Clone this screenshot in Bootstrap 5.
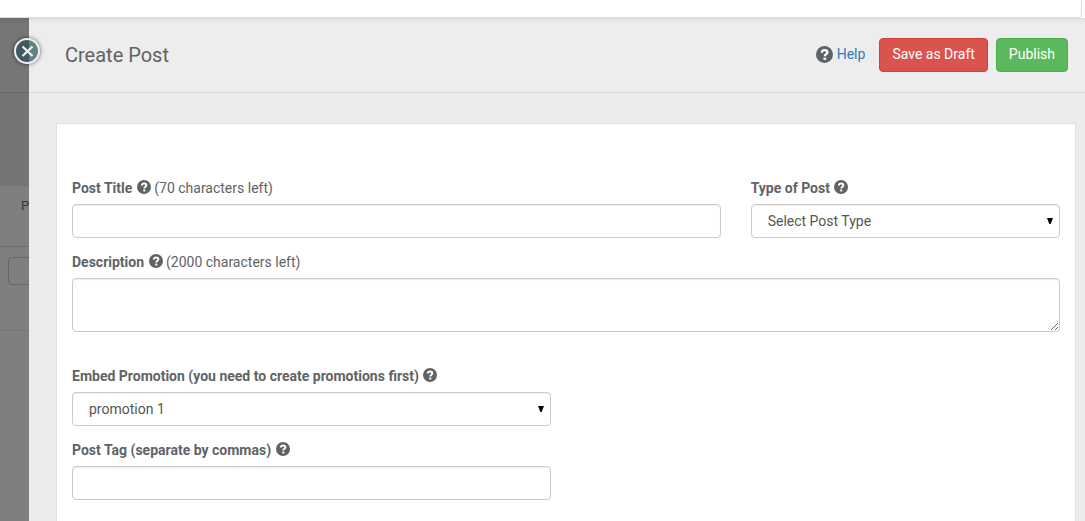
<!DOCTYPE html>
<html lang="en">
<head>
<meta charset="utf-8">
<meta name="viewport" content="width=device-width, initial-scale=1">
<title>Create Post</title>
<link href="https://cdn.jsdelivr.net/npm/bootstrap@5.3.0/dist/css/bootstrap.min.css" rel="stylesheet">
<style>
  body { font-family: Roboto, "Liberation Sans", sans-serif; font-size: 14px; line-height: 20px; color: #5f6365; background: #fff; }
  .top-strip { height: 18px; padding-right: 3px; background: #fff; }
  .top-box { height: 18px; border: solid #ddd; border-width: 0 1px 1px 0; border-bottom-right-radius: 4px; }
  .stage { background: #ebebeb; }
  /* dimmed page behind the panel */
  .backdrop-page { width: 29px; flex: none; background: #7f7f7f; color: #363839; font-size: 13px; white-space: nowrap; }
  .bd-head { height: 75px; background: linear-gradient(#6c6c6c, #767676 6px); border-bottom: 1px solid #6b6b6b; }
  .bd-space { height: 93px; background: #757575; border-bottom: 1px solid #727272; }
  .bd-row { height: 61px; padding: 10px 0 0 21px; border-bottom: 1px solid #6e6e6e; }
  .bd-field { height: 84px; padding: 10px 0 0 8px; border-bottom: 1px solid #747474; }
  .bd-field input { display: block; width: 90px; height: 28px; border: 1px solid #666; border-radius: 4px; background: transparent; }
  .panel-head { height: 75px; padding: 0 17px 0 36px; border-bottom: 1px solid #d8d8d8; background: linear-gradient(#dcdcdc, #e8e8e8 3px, #ededed 6px); }
  .panel-head h1 { font-size: 20px; line-height: 24px; font-weight: 400; }
  .close-round { position: absolute; left: 14px; top: 20px; width: 26px; height: 26px; padding: 0; border: 2px solid #eee; border-radius: 50%; box-shadow: 0 0 4px rgba(0,0,0,.6); background: linear-gradient(90deg, #3f5a62 13px, #638086 13px); z-index: 2; }
  .close-round svg { display: block; width: 22px; height: 22px; }
  .help-link { color: #337ab7; text-decoration: none; margin-right: 14px; padding-bottom: 2px; }
  .help-link svg { width: 17px; height: 17px; color: #5f6365; margin-right: 4px; }
  .btn { font-size: 14px; line-height: 20px; padding: 5px 12px 7px; border-radius: 4px; color: #fff; }
  .btn-draft { background: #d9534f; border-color: #d43f3a; }
  .btn-publish { background: #5cb85c; border-color: #4cae4c; }
  .panel-body { padding: 30px 9px 0 27px; }
  .form-sheet { padding: 54px 15px 21px; border: 1px solid #e0e0e0; border-bottom: 0; background: #fff; }
  .form-sheet .row { --bs-gutter-x: 30px; }
  .field { margin-bottom: 14px; }
  .field-wide { margin-bottom: 34px; }
  .field-label { display: block; margin-bottom: 6px; line-height: 20px; }
  .field-label b { font-weight: 700; }
  .q-icon { width: 14px; height: 14px; margin-left: 1px; vertical-align: -1px; }
  .form-control, .form-select { height: 34px; font-size: 14px; line-height: 20px; padding: 6px 12px; color: #555; border: 1px solid #ccc; border-radius: 4px; box-shadow: inset 0 1px 1px rgba(0,0,0,.075); }
  .form-select { padding: 6px 24px 6px 16px; background: #fff url("data:image/svg+xml,%3Csvg xmlns='http://www.w3.org/2000/svg' viewBox='0 0 6 6'%3E%3Cpath d='M0 0h6L3.6 6H2.4z'/%3E%3C/svg%3E") no-repeat right 6px center / 6px 6px; }
  textarea.form-control { height: 54px; min-height: 54px; }
</style>
</head>
<body class="d-flex flex-column min-vh-100">
<svg class="d-none" aria-hidden="true">
  <symbol id="question" viewBox="0 0 16 16">
    <circle cx="8" cy="8" r="8" fill="currentColor"/>
    <path d="M5.500 6.400C5.500 4.600 6.500 3.900 8 3.900c1.600 0 2.700.7 2.700 2.100 0 1.800-2.400 1.600-2.400 3.700" fill="none" stroke="#fff" stroke-width="2.200"/>
    <path d="M7.100 10.900h2.400v2.200H7.100z" fill="#fff"/>
  </symbol>
</svg>
<div class="top-strip"><div class="top-box"></div></div>
<div class="stage d-flex flex-grow-1 position-relative">
  <aside class="backdrop-page overflow-hidden" aria-hidden="true">
    <div class="bd-head"></div>
    <div class="bd-space"></div>
    <div class="bd-row">P</div>
    <div class="bd-field"><input type="text" tabindex="-1" aria-label="Filter"></div>
  </aside>
  <button type="button" class="close-round" aria-label="Close">
    <svg viewBox="0 0 22 22"><path d="M6.500 6.500l10 9.500M16.500 6.500l-10 9.500" stroke="#f2f2f2" stroke-width="2.200" fill="none"/></svg>
  </button>
  <main class="d-flex flex-column flex-grow-1">
    <header class="panel-head d-flex align-items-center">
      <h1 class="mb-0 me-auto">Create Post</h1>
      <a href="#" class="help-link d-flex align-items-center"><svg aria-hidden="true"><use href="#question"/></svg>Help</a>
      <button type="button" class="btn btn-draft me-2">Save as Draft</button>
      <button type="submit" form="post-form" class="btn btn-publish">Publish</button>
    </header>
    <div class="panel-body d-flex flex-column flex-grow-1">
      <form id="post-form" class="form-sheet flex-grow-1">
        <div class="row">
          <div class="col-8 field">
            <label class="field-label" for="title"><b>Post Title</b> <svg class="q-icon"><use href="#question"/></svg> (70 characters left)</label>
            <input id="title" type="text" class="form-control">
          </div>
          <div class="col-4 field">
            <label class="field-label" for="type"><b>Type of Post</b> <svg class="q-icon"><use href="#question"/></svg></label>
            <select id="type" class="form-select"><option>Select Post Type</option></select>
          </div>
        </div>
        <div class="field-wide">
          <label class="field-label" for="desc"><b>Description</b> <svg class="q-icon"><use href="#question"/></svg> (2000 characters left)</label>
          <textarea id="desc" class="form-control d-block"></textarea>
        </div>
        <div class="row">
          <div class="col-6">
            <div class="field">
              <label class="field-label" for="promo"><b>Embed Promotion (you need to create promotions first)</b> <svg class="q-icon"><use href="#question"/></svg></label>
              <select id="promo" class="form-select"><option>promotion 1</option></select>
            </div>
            <div>
              <label class="field-label" for="tag"><b>Post Tag (separate by commas)</b> <svg class="q-icon"><use href="#question"/></svg></label>
              <input id="tag" type="text" class="form-control">
            </div>
          </div>
        </div>
      </form>
    </div>
  </main>
</div>
<script src="https://cdn.jsdelivr.net/npm/bootstrap@5.3.0/dist/js/bootstrap.bundle.min.js"></script>
</body>
</html>
